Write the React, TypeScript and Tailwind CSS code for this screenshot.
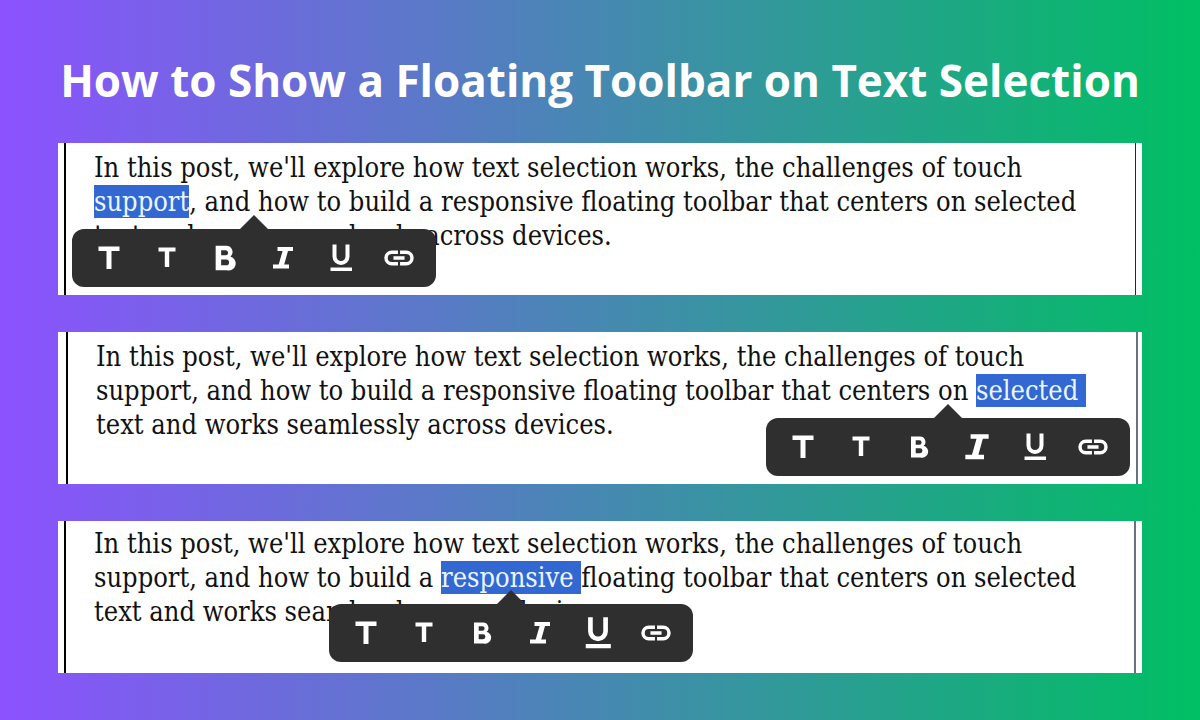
import React from 'react';

type Tool = 'heading' | 'subheading' | 'bold' | 'italic' | 'underline' | 'link';

interface Demo {
  before: string;
  selected: string;
  after: string;
  hovered: Tool;
  panelClass: string;
  toolbarClass: string;
}

const LINE_ONE = "In this post, we'll explore how text selection works, the challenges of touch";
const LINE_THREE = 'text and works seamlessly across devices.';

const demos: Demo[] = [
  {
    before: '',
    selected: 'support',
    after: ', and how to build a responsive floating toolbar that centers on selected',
    hovered: 'bold',
    panelClass: 'pt-2 border-r border-r-gray-800',
    toolbarClass: 'top-[86px] left-3.5',
  },
  {
    before: 'support, and how to build a responsive floating toolbar that centers on ',
    selected: 'selected ',
    after: '',
    hovered: 'italic',
    panelClass: 'ml-0.5 -mr-0.5 pt-2 border-r-2 border-r-gray-500',
    toolbarClass: 'top-[86px] right-3',
  },
  {
    before: 'support, and how to build a ',
    selected: 'responsive ',
    after: 'floating toolbar that centers on selected',
    hovered: 'underline',
    panelClass: 'pt-1.5 border-r-2 border-r-gray-500',
    toolbarClass: 'top-[83px] left-[271px]',
  },
];

const tools: { id: Tool; label: string; icon: React.ReactNode }[] = [
  { id: 'heading', label: 'Heading', icon: <path d="M1.500 0.500h21v4.500h-8v18h-5v-18h-8z" /> },
  { id: 'subheading', label: 'Subheading', icon: <path d="M3.500 1.500h17v4h-6.300v15.500h-4.400V5.500H3.500z" /> },
  {
    id: 'bold',
    label: 'Bold',
    icon: (
      <path
        fillRule="evenodd"
        d="M4 1.500h9a5.300 5.300 0 0 1 3.600 9.300A5.800 5.800 0 0 1 13.600 22.500H4zM8.700 5.300v4.400h3.700a2.200 2.200 0 0 0 0-4.400zM8.700 13.300v4.900h4.300a2.450 2.450 0 0 0 0-4.900z"
      />
    ),
  },
  {
    id: 'italic',
    label: 'Italic',
    icon: <path d="M6.500 1h15.500v3.900h-5L13.200 18.600h4.800v3.900H2v-3.900h5.700L11.600 4.900H6.500z" />,
  },
  {
    id: 'underline',
    label: 'Underline',
    icon: (
      <path d="M3.500-1.500h4v12a4.500 4.500 0 0 0 9 0v-12h4v12a8.500 8.500 0 0 1-17 0zM1.500 21.500h21.500v3.500h-21.500z" />
    ),
  },
  {
    id: 'link',
    label: 'Link',
    icon: (
      <path d="M11.300 17H7.200A5 5 0 0 1 7.200 7h4.100v2.300H7.200a2.700 2.700 0 0 0 0 5.400h4.100zM8.300 13.100v-2.200h7.400v2.200zM12.700 17v-2.300h4.100a2.700 2.700 0 0 0 0-5.400h-4.100V7h4.100a5 5 0 0 1 0 10z" />
    ),
  },
];

function FloatingToolbar({ hovered, className }: { hovered: Tool; className: string }) {
  return (
    <div
      role="toolbar"
      aria-label="Text formatting"
      className={`absolute flex h-[58px] w-[364px] rounded-xl bg-[#2f2f2f] px-2 text-white ${className}`}
    >
      {/* Arrow */}
      <svg viewBox="0 0 28 14" className="absolute -top-3.5 left-1/2 h-3.5 w-7 -translate-x-1/2 fill-[#2f2f2f]">
        <path d="M0 14 14 0l14 14z" />
      </svg>
      {tools.map((t) => (
        <button key={t.id} type="button" aria-label={t.label} className="flex flex-1 items-center justify-center">
          <svg
            viewBox="0 0 24 24"
            className={`overflow-visible fill-current ${
              t.id === 'link' ? 'size-9' : t.id === hovered ? 'size-7' : 'size-6'
            }`}
          >
            {t.icon}
          </svg>
        </button>
      ))}
    </div>
  );
}

function DemoPanel({ demo }: { demo: Demo }) {
  return (
    <section className="relative bg-white px-1.5">
      <div className={`min-h-[152px] border-l-2 border-l-black pl-7 ${demo.panelClass}`}>
        <p className="whitespace-pre font-['DejaVu_Serif_Condensed','DejaVu_Serif',serif] text-[27px] leading-[34px] text-[#111]">
          {LINE_ONE}
          <br />
          {demo.before}
          <mark className="bg-[#3367d1] py-px text-[#eaf6ff]">{demo.selected}</mark>
          {demo.after}
          <br />
          {LINE_THREE}
        </p>
      </div>
      <FloatingToolbar hovered={demo.hovered} className={demo.toolbarClass} />
    </section>
  );
}

export default function App() {
  return (
    <main className="min-h-screen bg-linear-to-r/srgb from-[#8c52ff] to-[#00bf63] px-[58px] pt-12 pb-12">
      <h1 className="text-center font-['Open_Sans',sans-serif] text-[44px] leading-[64px] font-bold whitespace-nowrap text-white">
        How to Show a Floating Toolbar on Text Selection
      </h1>

      {/* Demo panels */}
      <div className="mt-[31px] flex flex-col gap-[37px]">
        {demos.map((demo) => (
          <DemoPanel key={demo.hovered} demo={demo} />
        ))}
      </div>
    </main>
  );
}
